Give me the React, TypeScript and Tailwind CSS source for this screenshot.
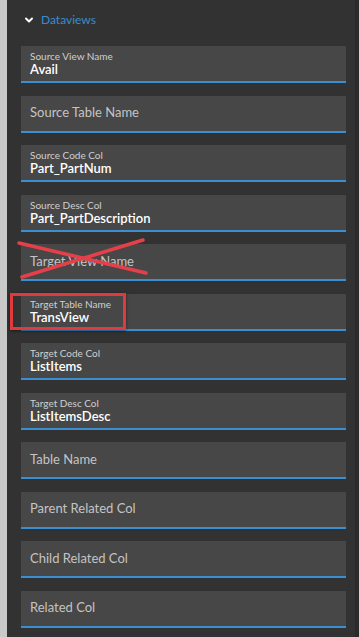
import { ChevronDown } from 'lucide-react';

type Field = { label: string; value?: string };

const fields: Field[] = [
  { label: 'Source View Name', value: 'Avail' },
  { label: 'Source Table Name' },
  { label: 'Source Code Col', value: 'Part_PartNum' },
  { label: 'Source Desc Col', value: 'Part_PartDescription' },
  { label: 'Target View Name' },
  { label: 'Target Table Name', value: 'TransView' },
  { label: 'Target Code Col', value: 'ListItems' },
  { label: 'Target Desc Col', value: 'ListItemsDesc' },
  { label: 'Table Name' },
  { label: 'Parent Related Col' },
  { label: 'Child Related Col' },
  { label: 'Related Col' },
];

function FieldBox({ label, value }: Field) {
  return (
    <div className="h-[37px] bg-[#474747] border-b-2 border-[#3b8fd0] pl-[9px] flex flex-col justify-center">
      {value ? (
        <>
          <span className="text-[10px] leading-[12px] text-[#cfcfcf]">{label}</span>
          <span className="text-[13px] leading-[15px] font-semibold text-white">{value}</span>
        </>
      ) : (
        <span className="text-[13px] text-[#c4c4c4]">{label}</span>
      )}
    </div>
  );
}

export default function App() {
  return (
    <div
      className="h-[637px] w-[359px] flex bg-[#c9c9c9] overflow-hidden"
      style={{ fontFamily: 'Lato, "Open Sans", sans-serif' }}
    >
      <div className="w-[7px]" />
      <div className="relative flex-1 bg-[#323232] border-r-4 border-[#2b2b2b]">
        {/* Header */}
        <div className="h-[46px] flex items-center gap-[6px] pl-[16px] pb-[6px]">
          <ChevronDown className="w-[12px] h-[12px] text-white" strokeWidth={4} />
          <span className="text-[12px] text-[#3a8dcd]">Dataviews</span>
        </div>

        {/* Fields */}
        <div className="flex flex-col gap-[12.5px] pl-[14px] pr-[9px]">
          {fields.map((f) => (
            <FieldBox key={f.label} {...f} />
          ))}
        </div>

        {/* Annotations */}
        <svg className="absolute left-0 top-0 pointer-events-none" width="348" height="637">
          <line x1="12" y1="243" x2="139" y2="273" stroke="#e5404a" strokeWidth="3.5" strokeLinecap="round" />
          <line x1="136" y1="240" x2="15" y2="277" stroke="#e5404a" strokeWidth="3.5" strokeLinecap="round" />
        </svg>
        <div className="absolute left-[3px] top-[293px] w-[116px] h-[37px] border-[3px] border-[#e0393e] shadow-[0_1px_3px_rgba(0,0,0,0.5)]" />
      </div>
    </div>
  );
}
